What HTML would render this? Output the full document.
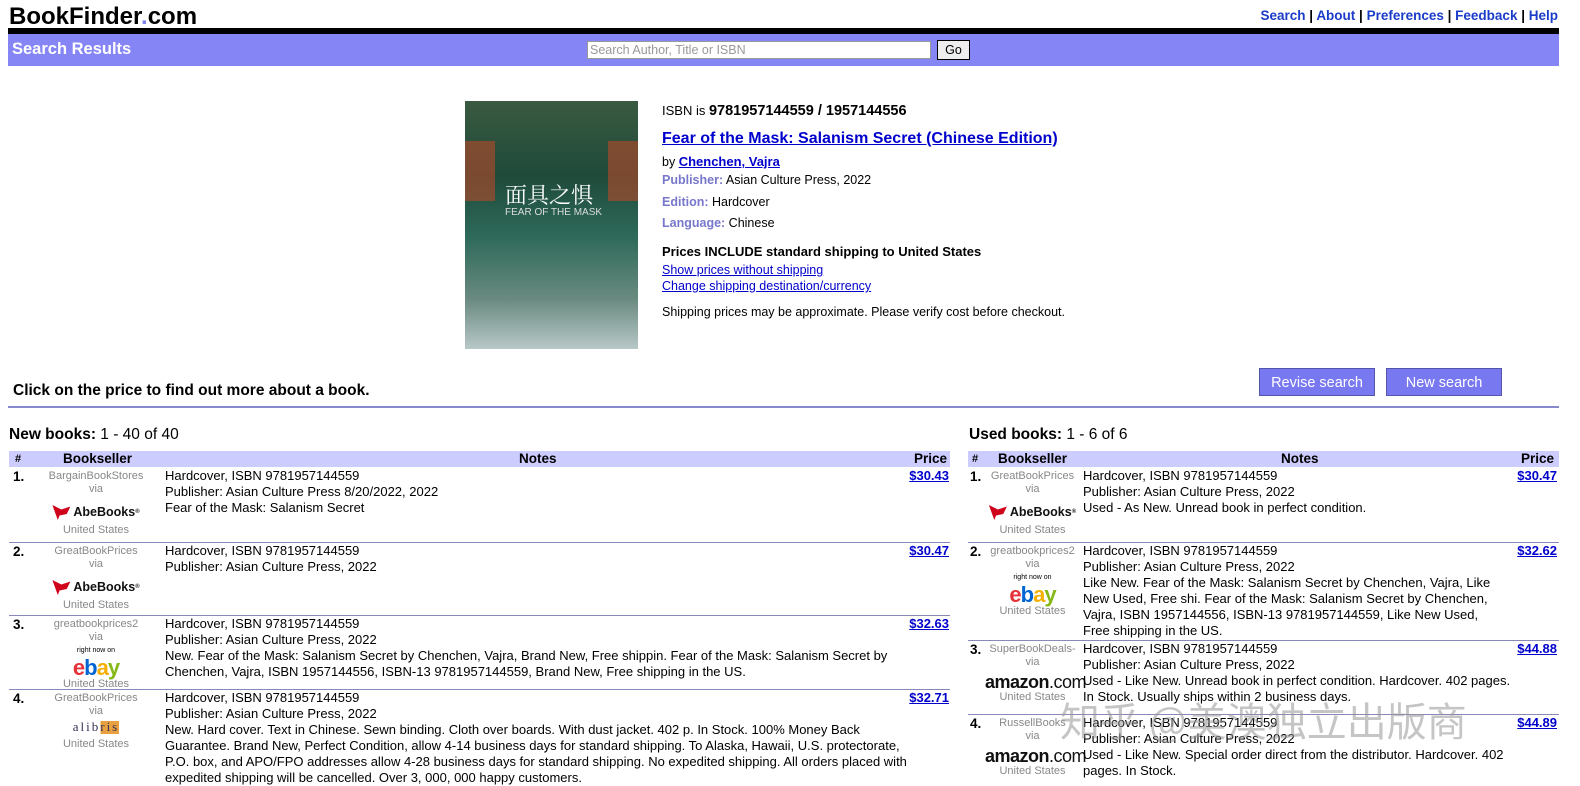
<!DOCTYPE html>
<html><head><meta charset="utf-8"><style>
*{margin:0;padding:0;box-sizing:border-box}
body{width:1580px;height:784px;overflow:hidden;background:#fff;font-family:"Liberation Sans",Arial,sans-serif;font-size:12.5px;color:#000;position:relative}
.a{position:absolute}
a{color:#00c;text-decoration:underline}
.nav{right:22px;top:8px;font-size:13.5px;font-weight:bold;color:#000}
.nav a{color:#1a3cc8;text-decoration:none}
.th{background:#ccccff;font-weight:bold;font-size:13.5px;height:16px;line-height:16px}
.n{font-weight:bold;font-size:13.5px}
.bs{text-align:center;color:#888;font-size:11px;line-height:12.5px}
.nt{line-height:16px;font-size:13px}
.pr{font-weight:bold;font-size:13px;text-align:right}
.sep{height:1px;background:#8888bb}
.abe{display:inline-flex;align-items:center;font-weight:bold;color:#111;font-size:12.5px;margin:10px 0 4px}
.abe i{display:inline-block;width:18px;height:15px;background:#d0021b;clip-path:polygon(0 0,50% 30%,100% 10%,80% 60%,40% 70%,30% 100%);margin-right:3px}
.amz{font-size:18px;font-weight:bold;color:#111;letter-spacing:-0.5px;margin:8px 0 2px}
.amz span{font-weight:normal}
.ebay{font-size:22px;font-weight:bold;letter-spacing:-1px;line-height:20px}
.lbl{color:#7777cc;font-weight:bold}
.btn{background:#7878f0;color:#fff;font-size:14.5px;text-align:center;line-height:28px;height:28px;border:1px solid #5555aa}
</style></head><body>
<div class="a" style="left:9px;top:3px;font-size:24px;font-weight:bold">BookFinder<span style="color:#8080f0">.</span>com</div>
<div class="a nav"><a>Search</a> | <a>About</a> | <a>Preferences</a> | <a>Feedback</a> | <a>Help</a></div>
<div class="a" style="left:8px;top:28px;width:1551px;height:6px;background:#000"></div>
<div class="a" style="left:8px;top:34px;width:1551px;height:32px;background:#8585f5"></div>
<div class="a" style="left:12px;top:40px;color:#fff;font-size:16.5px;font-weight:bold">Search Results</div>
<div class="a" style="left:587px;top:41px;width:344px;height:18px;background:#fff;border:1px solid #999;color:#999;font-size:12.5px;padding-left:2px;line-height:16px">Search Author, Title or ISBN</div>
<div class="a" style="left:937px;top:40px;width:33px;height:20px;background:#eee;border:1px solid #000;text-align:center;line-height:18px;font-size:12.5px">Go</div>

<div class="a" style="left:465px;top:101px;width:173px;height:248px;background:linear-gradient(180deg,#3a5a40 0%,#1f4a3a 30%,#2e6a5a 55%,#6a8a80 80%,#b8c8c8 100%)">
<div style="position:absolute;left:40px;top:78px;color:#fff;font-size:22px;font-family:'Noto Serif CJK SC',serif">面具之惧</div>
<div style="position:absolute;left:40px;top:106px;color:#ddd;font-size:10px">FEAR OF THE MASK</div>
<div style="position:absolute;left:0;top:40px;width:30px;height:60px;background:#b84a2a;opacity:.6"></div>
<div style="position:absolute;right:0;top:40px;width:30px;height:60px;background:#b84a2a;opacity:.6"></div>
</div>

<div class="a" style="left:662px;top:103px;font-size:13px">ISBN is <b style="font-size:14.5px">9781957144559 / 1957144556</b></div>
<div class="a" style="left:662px;top:130px;font-size:16px;font-weight:bold"><a>Fear of the Mask: Salanism Secret (Chinese Edition)</a></div>
<div class="a" style="left:662px;top:154px;font-size:12.5px">by <a style="font-weight:bold;font-size:13px">Chenchen, Vajra</a></div>
<div class="a" style="left:662px;top:173px"><span class="lbl">Publisher:</span> Asian Culture Press, 2022</div>
<div class="a" style="left:662px;top:195px"><span class="lbl">Edition:</span> Hardcover</div>
<div class="a" style="left:662px;top:216px"><span class="lbl">Language:</span> Chinese</div>
<div class="a" style="left:662px;top:244px;font-weight:bold;font-size:13px">Prices INCLUDE standard shipping to United States</div>
<div class="a" style="left:662px;top:263px"><a>Show prices without shipping</a></div>
<div class="a" style="left:662px;top:279px"><a>Change shipping destination/currency</a></div>
<div class="a" style="left:662px;top:305px">Shipping prices may be approximate. Please verify cost before checkout.</div>

<div class="a" style="left:13px;top:382px;font-size:15.5px;font-weight:bold">Click on the price to find out more about a book.</div>
<div class="a btn" style="left:1259px;top:368px;width:116px">Revise search</div>
<div class="a btn" style="left:1386px;top:368px;width:116px">New search</div>
<div class="a" style="left:8px;top:406px;width:1551px;height:2px;background:#8888cc"></div>

<div class="a" style="left:9px;top:426px;font-size:15.5px"><b>New books:</b> 1 - 40 of 40</div>
<div class="a th" style="left:9px;top:451px;width:941px"><span class="a" style="left:6px;font-size:11px">#</span><span class="a" style="left:54px">Bookseller</span><span class="a" style="left:510px">Notes</span><span class="a" style="right:3px">Price</span></div>

<div class="a n" style="left:13px;top:469px">1.</div>
<div class="a bs" style="left:30px;top:470px;width:132px">BargainBookStores<br>via<br><span class="abe"><i></i>AbeBooks<sup style="font-size:6px">®</sup></span><br>United States</div>
<div class="a nt" style="left:165px;top:468px">Hardcover, ISBN 9781957144559<br>Publisher: Asian Culture Press 8/20/2022, 2022<br>Fear of the Mask: Salanism Secret</div>
<div class="a pr" style="right:631px;top:468px"><a>$30.43</a></div>
<div class="a sep" style="left:9px;top:542px;width:941px"></div>

<div class="a n" style="left:13px;top:544px">2.</div>
<div class="a bs" style="left:30px;top:545px;width:132px">GreatBookPrices<br>via<br><span class="abe"><i></i>AbeBooks<sup style="font-size:6px">®</sup></span><br>United States</div>
<div class="a nt" style="left:165px;top:543px">Hardcover, ISBN 9781957144559<br>Publisher: Asian Culture Press, 2022</div>
<div class="a pr" style="right:631px;top:543px"><a>$30.47</a></div>
<div class="a sep" style="left:9px;top:615px;width:941px"></div>

<div class="a n" style="left:13px;top:617px">3.</div>
<div class="a bs" style="left:30px;top:618px;width:132px">greatbookprices2<br>via<br><span style="font-size:7px;color:#000">right now on</span><br><span class="ebay"><span style="color:#e53238">e</span><span style="color:#0064d2">b</span><span style="color:#f5af02">a</span><span style="color:#86b817">y</span></span><br>United States</div>
<div class="a nt" style="left:165px;top:616px;width:740px">Hardcover, ISBN 9781957144559<br>Publisher: Asian Culture Press, 2022<br>New. Fear of the Mask: Salanism Secret by Chenchen, Vajra, Brand New, Free shippin. Fear of the Mask: Salanism Secret by Chenchen, Vajra, ISBN 1957144556, ISBN-13 9781957144559, Brand New, Free shipping in the US.</div>
<div class="a pr" style="right:631px;top:616px"><a>$32.63</a></div>
<div class="a sep" style="left:9px;top:689px;width:941px"></div>

<div class="a n" style="left:13px;top:691px">4.</div>
<div class="a bs" style="left:30px;top:692px;width:132px">GreatBookPrices<br>via<br><span style="font-family:'Liberation Serif',serif;font-size:13px;color:#335;letter-spacing:2px;background:linear-gradient(90deg,#fff 60%,#e8a040 60%);display:inline-block;margin:4px 0">alibris</span><br>United States</div>
<div class="a nt" style="left:165px;top:690px;width:745px">Hardcover, ISBN 9781957144559<br>Publisher: Asian Culture Press, 2022<br>New. Hard cover. Text in Chinese. Sewn binding. Cloth over boards. With dust jacket. 402 p. In Stock. 100% Money Back Guarantee. Brand New, Perfect Condition, allow 4-14 business days for standard shipping. To Alaska, Hawaii, U.S. protectorate, P.O. box, and APO/FPO addresses allow 4-28 business days for standard shipping. No expedited shipping. All orders placed with expedited shipping will be cancelled. Over 3, 000, 000 happy customers.</div>
<div class="a pr" style="right:631px;top:690px"><a>$32.71</a></div>

<div class="a" style="left:969px;top:426px;font-size:15.5px"><b>Used books:</b> 1 - 6 of 6</div>
<div class="a th" style="left:968px;top:451px;width:591px"><span class="a" style="left:4px;font-size:11px">#</span><span class="a" style="left:30px">Bookseller</span><span class="a" style="left:313px">Notes</span><span class="a" style="right:5px">Price</span></div>

<div class="a n" style="left:970px;top:469px">1.</div>
<div class="a bs" style="left:985px;top:470px;width:95px">GreatBookPrices<br>via<br><span class="abe"><i></i>AbeBooks<sup style="font-size:6px">®</sup></span><br>United States</div>
<div class="a nt" style="left:1083px;top:468px">Hardcover, ISBN 9781957144559<br>Publisher: Asian Culture Press, 2022<br>Used - As New. Unread book in perfect condition.</div>
<div class="a pr" style="right:23px;top:468px"><a>$30.47</a></div>
<div class="a sep" style="left:968px;top:542px;width:591px"></div>

<div class="a n" style="left:970px;top:544px">2.</div>
<div class="a bs" style="left:985px;top:545px;width:95px">greatbookprices2<br>via<br><span style="font-size:7px;color:#000">right now on</span><br><span class="ebay"><span style="color:#e53238">e</span><span style="color:#0064d2">b</span><span style="color:#f5af02">a</span><span style="color:#86b817">y</span></span><br>United States</div>
<div class="a nt" style="left:1083px;top:543px;width:425px">Hardcover, ISBN 9781957144559<br>Publisher: Asian Culture Press, 2022<br>Like New. Fear of the Mask: Salanism Secret by Chenchen, Vajra, Like New Used, Free shi. Fear of the Mask: Salanism Secret by Chenchen, Vajra, ISBN 1957144556, ISBN-13 9781957144559, Like New Used, Free shipping in the US.</div>
<div class="a pr" style="right:23px;top:543px"><a>$32.62</a></div>
<div class="a sep" style="left:968px;top:640px;width:591px"></div>

<div class="a n" style="left:970px;top:642px">3.</div>
<div class="a bs" style="left:985px;top:643px;width:95px">SuperBookDeals-<br>via<br><div class="amz">amazon<span>.com</span></div>United States</div>
<div class="a nt" style="left:1083px;top:641px;width:430px">Hardcover, ISBN 9781957144559<br>Publisher: Asian Culture Press, 2022<br>Used - Like New. Unread book in perfect condition. Hardcover. 402 pages. In Stock. Usually ships within 2 business days.</div>
<div class="a pr" style="right:23px;top:641px"><a>$44.88</a></div>
<div class="a sep" style="left:968px;top:714px;width:591px"></div>

<div class="a n" style="left:970px;top:716px">4.</div>
<div class="a bs" style="left:985px;top:717px;width:95px">RussellBooks<br>via<br><div class="amz">amazon<span>.com</span></div>United States</div>
<div class="a nt" style="left:1083px;top:715px;width:425px">Hardcover, ISBN 9781957144559<br>Publisher: Asian Culture Press, 2022<br>Used - Like New. Special order direct from the distributor. Hardcover. 402 pages. In Stock.</div>
<div class="a pr" style="right:23px;top:715px"><a>$44.89</a></div>

<div class="a" style="left:1060px;top:690px;font-size:40px;color:rgba(150,150,150,.55);font-family:'Noto Sans CJK SC',sans-serif;white-space:nowrap">知乎 @美澳独立出版商</div>
</body></html>
